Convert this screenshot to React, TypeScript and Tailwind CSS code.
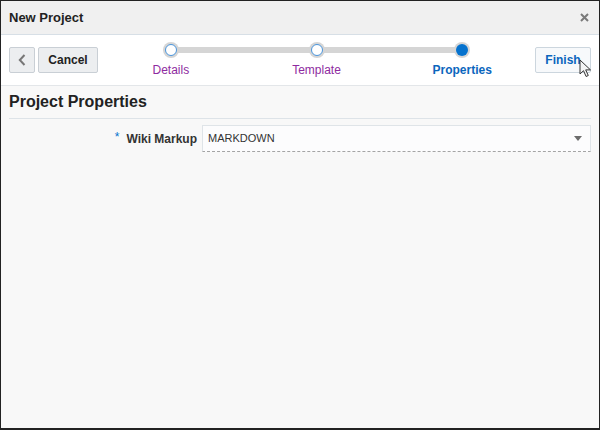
import React from 'react';

const steps = [
  { label: 'Details', state: 'visited' },
  { label: 'Template', state: 'visited' },
  { label: 'Properties', state: 'current' },
];

const TrainStop: React.FC<{ label: string; state: string }> = ({ label, state }) => (
  <div className="flex-1 flex flex-col items-center">
    <div className="relative z-10 w-[16px] h-[16px] rounded-full bg-[#d5d5d5] flex items-center justify-center">
      {state === 'current' ? (
        <div className="w-[12px] h-[12px] rounded-full bg-[#0572ce]" />
      ) : (
        <div className="w-[12px] h-[12px] rounded-full bg-white border-[1.5px] border-[#4a95dc]" />
      )}
    </div>
    <span
      className={
        state === 'current'
          ? 'mt-[5px] text-[12px] leading-[14px] font-bold text-[#0b66bd]'
          : 'mt-[5px] text-[12px] leading-[14px] text-[#8e2ba0]'
      }
    >
      {label}
    </span>
  </div>
);

export default function App() {
  return (
    <div className="w-[600px] h-[430px] border border-b-2 border-[#222] bg-[#f8f8f8] flex flex-col font-['Liberation_Sans',Arial,sans-serif] text-[#333] relative overflow-hidden">
      {/* dialog header */}
      <div className="h-[34px] shrink-0 bg-[#f0f0f0] border-b border-[#d7dfe6] flex items-center justify-between pl-[8px] pr-[10px]">
        <span className="text-[13px] font-bold text-[#222]">New Project</span>
        <svg width="9" height="9" viewBox="0 0 9 9" className="text-[#7a7a7a]">
          <path d="M1 1L8 8M8 1L1 8" stroke="currentColor" strokeWidth="2" />
        </svg>
      </div>

      {/* train toolbar */}
      <div className="h-[51px] shrink-0 bg-white border-b border-[#e3e6e9] flex items-start px-[8px]">
        <button className="mt-[12px] w-[26px] h-[26px] rounded-[2px] border border-[#c9cfd5] bg-[#eceef0] flex items-center justify-center text-[#777]">
          <svg width="8" height="12" viewBox="0 0 8 12">
            <path d="M6.5 1L1.8 6l4.7 5" fill="none" stroke="currentColor" strokeWidth="2" />
          </svg>
        </button>
        <button className="mt-[12px] ml-[3px] w-[60px] h-[26px] rounded-[2px] border border-[#c9cfd5] bg-[#eceef0] text-[12px] font-bold text-[#222]">
          Cancel
        </button>

        <div className="flex-1 relative flex pt-[7px]">
          <div className="absolute left-[73px] right-[73px] top-[12px] h-[6px] bg-[#d5d5d5]" />
          {steps.map((s) => (
            <TrainStop key={s.label} label={s.label} state={s.state} />
          ))}
        </div>

        <button className="mt-[12px] w-[56px] h-[26px] rounded-[2px] border border-[#ccd6de] bg-[#f7f9fb] text-[12px] font-bold text-[#0b66bd]">
          Finish
        </button>
      </div>

      {/* body */}
      <div className="flex-1 px-[8px]">
        <h2 className="pt-[7px] pb-[7px] leading-[18px] text-[16px] font-bold text-[#222] border-b border-[#dde3e8]">
          Project Properties
        </h2>

        <div className="mt-[6px] flex items-center">
          <div className="w-[188px] flex justify-end items-center">
            <span className="text-[12px] text-[#0572ce] self-start -mt-[2px] mr-[7px]">*</span>
            <span className="text-[12px] font-bold text-[#333]">Wiki Markup</span>
          </div>
          <div className="ml-[5px] flex-1 h-[27px] bg-[#fcfcfd] border border-[#dfe4e8] border-b-[#a4a4a4] [border-bottom-style:dashed] flex items-center justify-between pl-[5px] pr-[8px]">
            <span className="text-[11px] text-[#333]">MARKDOWN</span>
            <svg width="8" height="5" viewBox="0 0 8 5">
              <path d="M0 0h8L4 5z" fill="#6c6c6c" />
            </svg>
          </div>
        </div>
      </div>

      {/* mouse pointer over Finish */}
      <svg className="absolute left-[578px] top-[58px]" width="13" height="19" viewBox="0 0 13 19">
        <path
          d="M1 1v14l3.5-3.3 2.6 5.8 2.2-1-2.6-5.6H11.5z"
          fill="#f4f4f4"
          stroke="#333"
          strokeWidth="1"
          strokeLinejoin="round"
        />
      </svg>
    </div>
  );
}
